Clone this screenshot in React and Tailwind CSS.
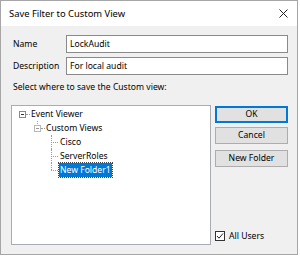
import React from 'react';

const TreeBox = ({ grey }) => (
  <span
    className={`flex items-center justify-center w-[7px] h-[7px] border bg-white shrink-0 ${
      grey ? 'border-[#b8b8b8]' : 'border-[#8a8a8a]'
    }`}
  >
    <span className={`w-[3px] h-px ${grey ? 'bg-[#9a9a9a]' : 'bg-[#333]'}`} />
  </span>
);

const Leaf = ({ label, selected, last }) => (
  <div className="relative flex items-center h-[14px] pl-[39px]">
    <span
      className={`absolute left-[39px] top-0 w-0 border-l border-dotted border-[#9a9a9a] ${
        last ? 'h-[7px]' : 'h-[14px]'
      }`}
    />
    <span className="w-[7px] border-t border-dotted border-[#9a9a9a]" />
    <span
      className={`ml-px px-[1px] leading-[14px] ${
        selected ? 'bg-[#0078d7] text-white outline outline-1 outline-dotted outline-[#444]' : ''
      }`}
    >
      {label}
    </span>
  </div>
);

const App = () => {
  return (
    <div className="w-[300px] h-[257px] bg-white font-['Noto_Sans',sans-serif] text-[8.6px] text-black leading-none">
      <div className="w-[298px] h-[255px] border border-[#a6a6a6] bg-[#f0f0f0] flex flex-col">
        {/* title bar */}
        <div className="h-[25px] bg-white flex items-center justify-between pl-[8px] pr-[9px] shrink-0">
          <span className="text-[9.4px]">Save Filter to Custom View</span>
          <svg width="9" height="9" viewBox="0 0 9 9">
            <path d="M0.5 0.5 L8.5 8.5 M8.5 0.5 L0.5 8.5" stroke="#222" strokeWidth="1" />
          </svg>
        </div>

        <div className="flex flex-col pl-[12px] pr-[9px] pt-[9px]">
          <div className="flex items-center h-[18px]">
            <span className="w-[53px]">Name</span>
            <div className="flex-1 h-[18px] bg-white border border-[#8a8a8a] flex items-center px-[3px]">
              LockAudit
            </div>
          </div>
          <div className="flex items-center h-[18px] mt-[4px]">
            <span className="w-[53px]">Description</span>
            <div className="flex-1 h-[18px] bg-white border border-[#8a8a8a] flex items-center px-[3px]">
              For local audit
            </div>
          </div>
          <div className="mt-[5px] h-[14px] flex items-center">Select where to save the Custom view:</div>
        </div>

        <div className="flex pl-[10px] pr-[9px] mt-[11px]">
          {/* tree */}
          <div className="w-[200px] h-[140px] bg-white border border-[#a9acb2] pt-px">
            <div className="flex items-center h-[14px] pl-[7px]">
              <TreeBox />
              <span className="w-[4px] border-t border-dotted border-[#9a9a9a]" />
              <span className="ml-[1px]">Event Viewer</span>
            </div>
            <div className="relative flex items-center h-[14px] pl-[22px]">
              <span className="absolute left-[25px] top-0 h-[3px] border-l border-dotted border-[#9a9a9a]" />
              <TreeBox grey />
              <span className="w-[4px] border-t border-dotted border-[#9a9a9a]" />
              <span className="ml-[1px]">Custom Views</span>
            </div>
            <Leaf label="Cisco" />
            <Leaf label="ServerRoles" />
            <Leaf label="New Folder1" selected last />
          </div>

          {/* buttons */}
          <div className="flex-1 flex flex-col ml-[4px] pt-px">
            <button className="h-[17px] bg-[#e1e1e1] border border-[#0078d7] outline outline-1 outline-[#0078d7] -outline-offset-2 flex items-center justify-center">
              OK
            </button>
            <button className="h-[17px] mt-[4px] bg-[#e1e1e1] border border-[#adadad] flex items-center justify-center">
              Cancel
            </button>
            <button className="h-[17px] mt-[6px] bg-[#e1e1e1] border border-[#adadad] flex items-center justify-center">
              New Folder
            </button>
            <div className="mt-auto flex items-center mb-[4px]">
              <span className="w-[10px] h-[10px] border border-[#333] bg-white flex items-center justify-center">
                <svg width="8" height="8" viewBox="0 0 8 8">
                  <path d="M1 4 L3 6.2 L7 1.5" stroke="#222" strokeWidth="1" fill="none" />
                </svg>
              </span>
              <span className="ml-[4px]">All Users</span>
            </div>
          </div>
        </div>
      </div>
    </div>
  );
};

export default App;
